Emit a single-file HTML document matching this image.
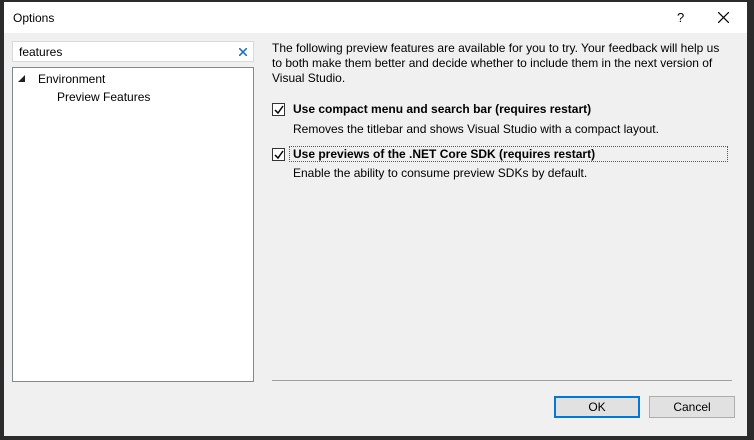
<!DOCTYPE html><html><head><style>
body{margin:0;width:754px;height:440px;background:#2b2b2b;overflow:hidden;font-family:"Liberation Sans",Segoe UI,sans-serif;font-size:12px;color:#000}
.win{position:absolute;left:4px;top:2px;width:743px;height:434px;background:#f0f0f0}
.title{position:absolute;left:0;top:0;width:743px;height:31px;background:#fff}
.abs{position:absolute;white-space:nowrap}
.search{position:absolute;left:8px;top:39px;width:240px;height:19px;background:#fff;border:1px solid #d9d9d9}
.tree{position:absolute;left:8px;top:65px;width:240px;height:313px;background:#fff;border:1px solid #828790}
.cb{position:absolute;width:11px;height:11px;border:1px solid #333;background:#fff}
.btn{position:absolute;top:394px;width:84px;height:20px;background:#e1e1e1;border:1px solid #adadad;text-align:center;line-height:20px}
</style></head><body><div class="win">
<div class="title"><span class="abs" style="left:9px;top:9px;font-size:12px">Options</span>
<span class="abs" style="left:673px;top:8px;font-size:13px">?</span>
<svg class="abs" style="left:714px;top:10px" width="11" height="11"><path d="M0 0L11 11M11 0L0 11" stroke="#000" stroke-width="1.2"/></svg></div>
<div class="search"><span class="abs" style="left:6px;top:3px">features</span>
<svg class="abs" style="left:226px;top:6px" width="8" height="8"><path d="M0 0L8 8M8 0L0 8" stroke="#1e73c8" stroke-width="1.6"/></svg></div>
<div class="tree"><svg class="abs" style="left:5px;top:7px" width="7" height="7"><path d="M7 0L7 7L0 7Z" fill="#222"/></svg>
<span class="abs" style="left:25px;top:4px">Environment</span>
<span class="abs" style="left:44px;top:22px">Preview Features</span></div>
<div class="abs" style="left:268px;top:39px;line-height:15px;white-space:normal;width:460px">The following preview features are available for you to try. Your feedback will help us to both make them better and decide whether to include them in the next version of Visual Studio.</div>
<div class="cb" style="left:268px;top:101px"></div>
<svg class="abs" style="left:270px;top:103px" width="10" height="10"><path d="M1 5L4 8L9 1" stroke="#000" stroke-width="1.5" fill="none"/></svg>
<span class="abs" style="left:289px;top:100px;font-weight:bold">Use compact menu and search bar (requires restart)</span>
<span class="abs" style="left:289px;top:120px">Removes the titlebar and shows Visual Studio with a compact layout.</span>
<div class="cb" style="left:268px;top:146px"></div>
<svg class="abs" style="left:270px;top:148px" width="10" height="10"><path d="M1 5L4 8L9 1" stroke="#000" stroke-width="1.5" fill="none"/></svg>
<div class="abs" style="left:285px;top:144px;width:437px;height:14px;border:1px dotted #555"></div>
<span class="abs" style="left:289px;top:145px;font-weight:bold">Use previews of the .NET Core SDK (requires restart)</span>
<span class="abs" style="left:289px;top:164px">Enable the ability to consume preview SDKs by default.</span>
<div class="abs" style="left:268px;top:378px;width:460px;height:1px;background:#a0a0a0"></div>
<div class="btn" style="left:550px;border:2px solid #0078d7;height:18px;line-height:18px;width:82px">OK</div>
<div class="btn" style="left:645px">Cancel</div>
</div></body></html>
